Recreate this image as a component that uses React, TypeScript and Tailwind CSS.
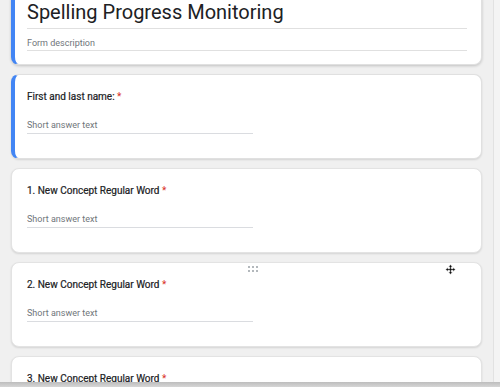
import React from "react";

const Question = ({ label, handle }: { label: string; handle?: boolean }) => (
  <div className="relative rounded-lg bg-white border border-[#e3e3e3] shadow-[0_1px_2px_rgba(0,0,0,0.12)] pl-[15px] pt-[14px] h-[85px]">
    {handle && (
      <>
        <div className="absolute left-[236px] top-[3px] grid grid-cols-3 gap-x-[2px] gap-y-[2px]">
          {[0, 1, 2, 3, 4, 5].map((i) => (
            <span key={i} className="block w-[2px] h-[2px] rounded-full bg-[#9aa0a6]" />
          ))}
        </div>
        <svg className="absolute left-[433px] top-[1px]" width="11" height="11" viewBox="0 0 11 11">
          <path d="M5.5 0.5 L7.5 3 H6.3 V4.7 H8 V3.5 L10.5 5.5 L8 7.5 V6.3 H6.3 V8 H7.5 L5.5 10.5 L3.5 8 H4.7 V6.3 H3 V7.5 L0.5 5.5 L3 3.5 V4.7 H4.7 V3 H3.5 Z" fill="#111" stroke="#fff" strokeWidth="0.6" />
        </svg>
      </>
    )}
    <div className="text-[10px] leading-[16px] text-[#202124] [-webkit-text-stroke:0.2px_#202124]">
      {label} <span className="text-[#d93025] [-webkit-text-stroke:0px]">*</span>
    </div>
    <div className="mt-[13px] w-[226px] border-b border-[#dadce0] text-[9px] leading-[15px] text-[#70757a]">
      Short answer text
    </div>
  </div>
);

export default function App() {
  return (
    <div
      className="relative h-[387px] w-[500px] overflow-hidden bg-[#f0f0f0]"
      style={{ fontFamily: "Roboto, 'Liberation Sans', sans-serif" }}
    >
      <div className="flex w-[482px] flex-col gap-[9px] pl-[11px]">
        <div className="-mt-[9px] rounded-lg border border-[#e0e0e0] border-l-[4px] border-l-[#4285f4] bg-white pl-[12px] pr-[14px] pt-[8px] pb-[13px] shadow-[0_1px_3px_rgba(0,0,0,0.2)]">
          <div className="border-b border-[#e0e0e0] pb-[4px] text-[20px] leading-[24px] text-[#202124]">
            Spelling Progress Monitoring
          </div>
          <div className="mt-[7px] border-b border-[#e0e0e0] text-[9px] leading-[14px] text-[#70757a]">
            Form description
          </div>
        </div>
        <div className="h-[85px] rounded-lg border border-[#e0e0e0] border-l-[4px] border-l-[#4285f4] bg-white pl-[12px] pt-[14px] shadow-[0_1px_2px_rgba(0,0,0,0.12)]">
          <div className="text-[10px] leading-[16px] text-[#202124] [-webkit-text-stroke:0.2px_#202124]">
            First and last name: <span className="text-[#d93025] [-webkit-text-stroke:0px]">*</span>
          </div>
          <div className="mt-[13px] w-[226px] border-b border-[#dadce0] text-[9px] leading-[15px] text-[#70757a]">
            Short answer text
          </div>
        </div>
        <Question label="1. New Concept Regular Word" />
        <Question label="2. New Concept Regular Word" handle />
        <Question label="3. New Concept Regular Word" />
      </div>
      <div className="absolute right-0 top-0 h-full w-[7px] border-l border-[#e2e2e2] bg-[#f4f4f4]" />
      <div className="absolute bottom-0 left-0 h-[5px] w-full bg-gradient-to-b from-[#bdbdbd] to-[#d6d6d6]" />
    </div>
  );
}
